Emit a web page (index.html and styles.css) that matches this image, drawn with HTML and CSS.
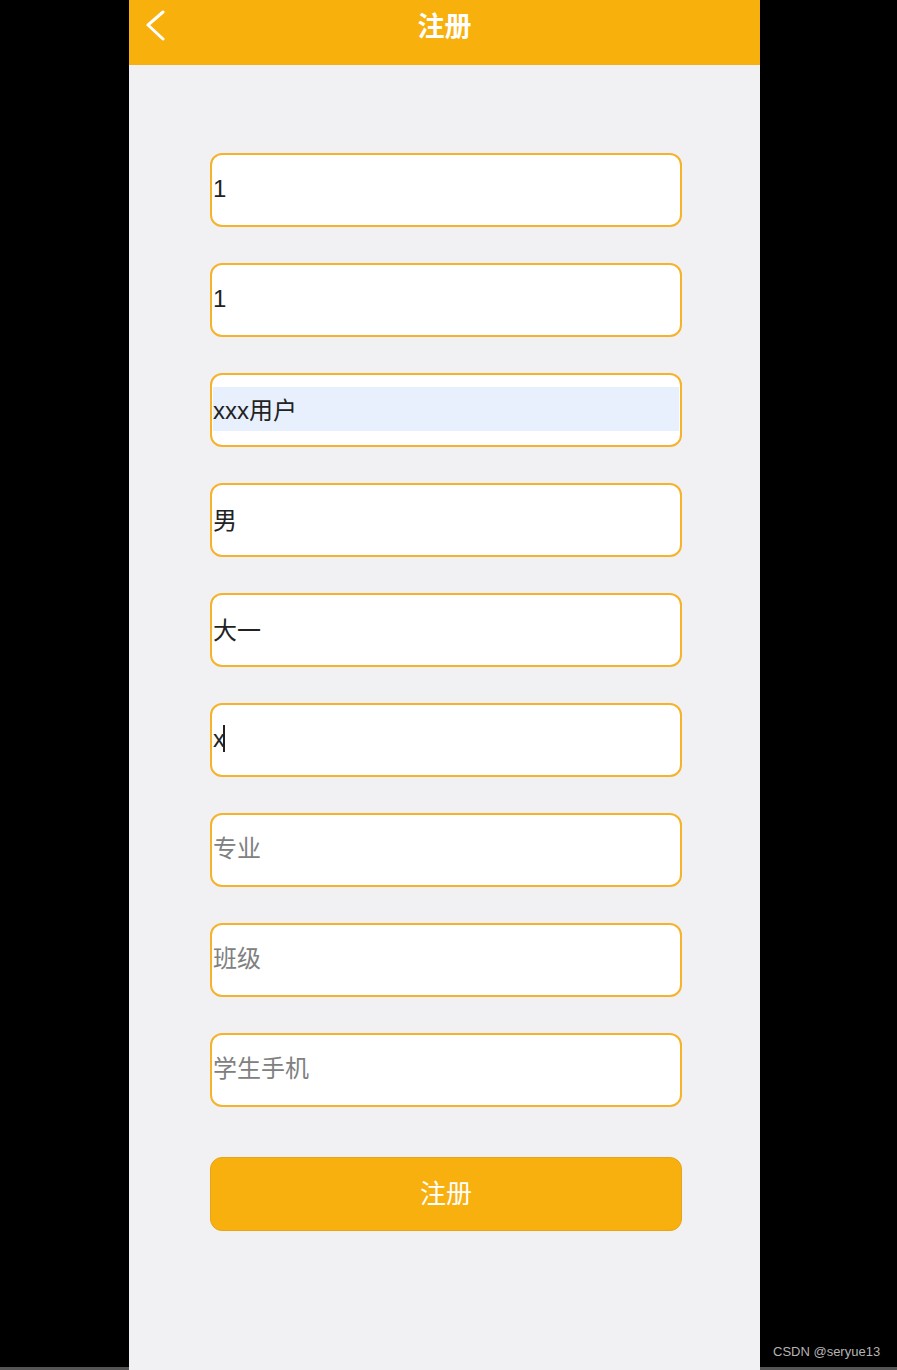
FILE: index.html
```html
<!DOCTYPE html>
<html lang="zh">
<head>
<meta charset="utf-8">
<title>注册</title>
<link rel="stylesheet" href="styles.css">
</head>
<body>
<div class="stage">
  <div class="side"></div>
  <div class="phone">
    <header class="topbar">
      <svg class="back" width="20" height="32" viewBox="0 0 20 32"><polyline points="17,2 2,15 17,29" fill="none" stroke="#fff" stroke-width="3" stroke-linecap="round" stroke-linejoin="round"/></svg>
      <h1 class="title">注册</h1>
    </header>
    <form class="form">
      <div class="field"><input class="inp" value="1"></div>
      <div class="field"><input class="inp" value="1"></div>
      <div class="field"><input class="inp autofill" value="xxx用户"></div>
      <div class="field"><input class="inp" value="男"></div>
      <div class="field"><input class="inp" value="大一"></div>
      <div class="field caretbox"><input class="inp" value="x"><span class="caret"></span></div>
      <div class="field"><input class="inp" placeholder="专业"></div>
      <div class="field"><input class="inp" placeholder="班级"></div>
      <div class="field"><input class="inp" placeholder="学生手机"></div>
      <button type="button" class="submit">注册</button>
    </form>
  </div>
  <div class="side right"><span class="mark">CSDN @seryue13</span></div>
</div>
</body>
</html>
```

FILE: styles.css
```css
html, body {
  margin: 0;
  padding: 0;
}
body {
  background: #555555;
  height: 1370px;
  overflow: hidden;
  font-family: "Liberation Sans", "Noto Sans CJK SC", sans-serif;
}
.stage {
  display: flex;
  align-items: flex-start;
  height: 1370px;
}
.side {
  width: 129px;
  height: 1367px;
  background: #000;
}
.side.right {
  flex: 1;
  position: relative;
}
.mark {
  position: absolute;
  left: 13px;
  top: 1344px;
  font-size: 13px;
  color: #b4b4b4;
  white-space: nowrap;
}
.phone {
  width: 631px;
  height: 1370px;
  background: #f1f0f2;
}
.topbar {
  height: 65px;
  background: #f8b00d;
  display: flex;
  align-items: center;
  justify-content: center;
  position: relative;
}
.back {
  position: absolute;
  left: 17px;
  top: 10px;
}
.title {
  margin: 0 0 10px 0;
  font-size: 27px;
  font-weight: bold;
  color: #fff;
  line-height: 1;
}
.form {
  display: flex;
  flex-direction: column;
  gap: 36px;
  padding: 88px 0 0 81px;
  margin: 0;
}
.field {
  width: 472px;
  height: 74px;
  box-sizing: border-box;
  border: 2.5px solid #f4b32a;
  border-radius: 12px;
  background: #fff;
  display: flex;
  align-items: center;
  padding: 0 1px 3px;
  position: relative;
}
.inp {
  width: 100%;
  height: 44px;
  border: none;
  outline: none;
  background: transparent;
  padding: 0;
  margin: 0;
  font-family: "Liberation Sans", "Noto Sans CJK SC", sans-serif;
  font-size: 24px;
  color: #222;
}
.inp::placeholder {
  color: #808080;
}
.inp.autofill {
  background: #e8f0fe;
}
.caret {
  position: absolute;
  left: 11px;
  top: 20px;
  width: 1.5px;
  height: 27px;
  background: #222;
}
.submit {
  margin-top: 14px;
  width: 472px;
  height: 74px;
  border: 1px solid #e5a515;
  border-radius: 12px;
  background: #f8b00f;
  color: #fff;
  font-family: "Liberation Sans", "Noto Sans CJK SC", sans-serif;
  font-size: 26px;
  padding: 0 0 6px;
}
```
